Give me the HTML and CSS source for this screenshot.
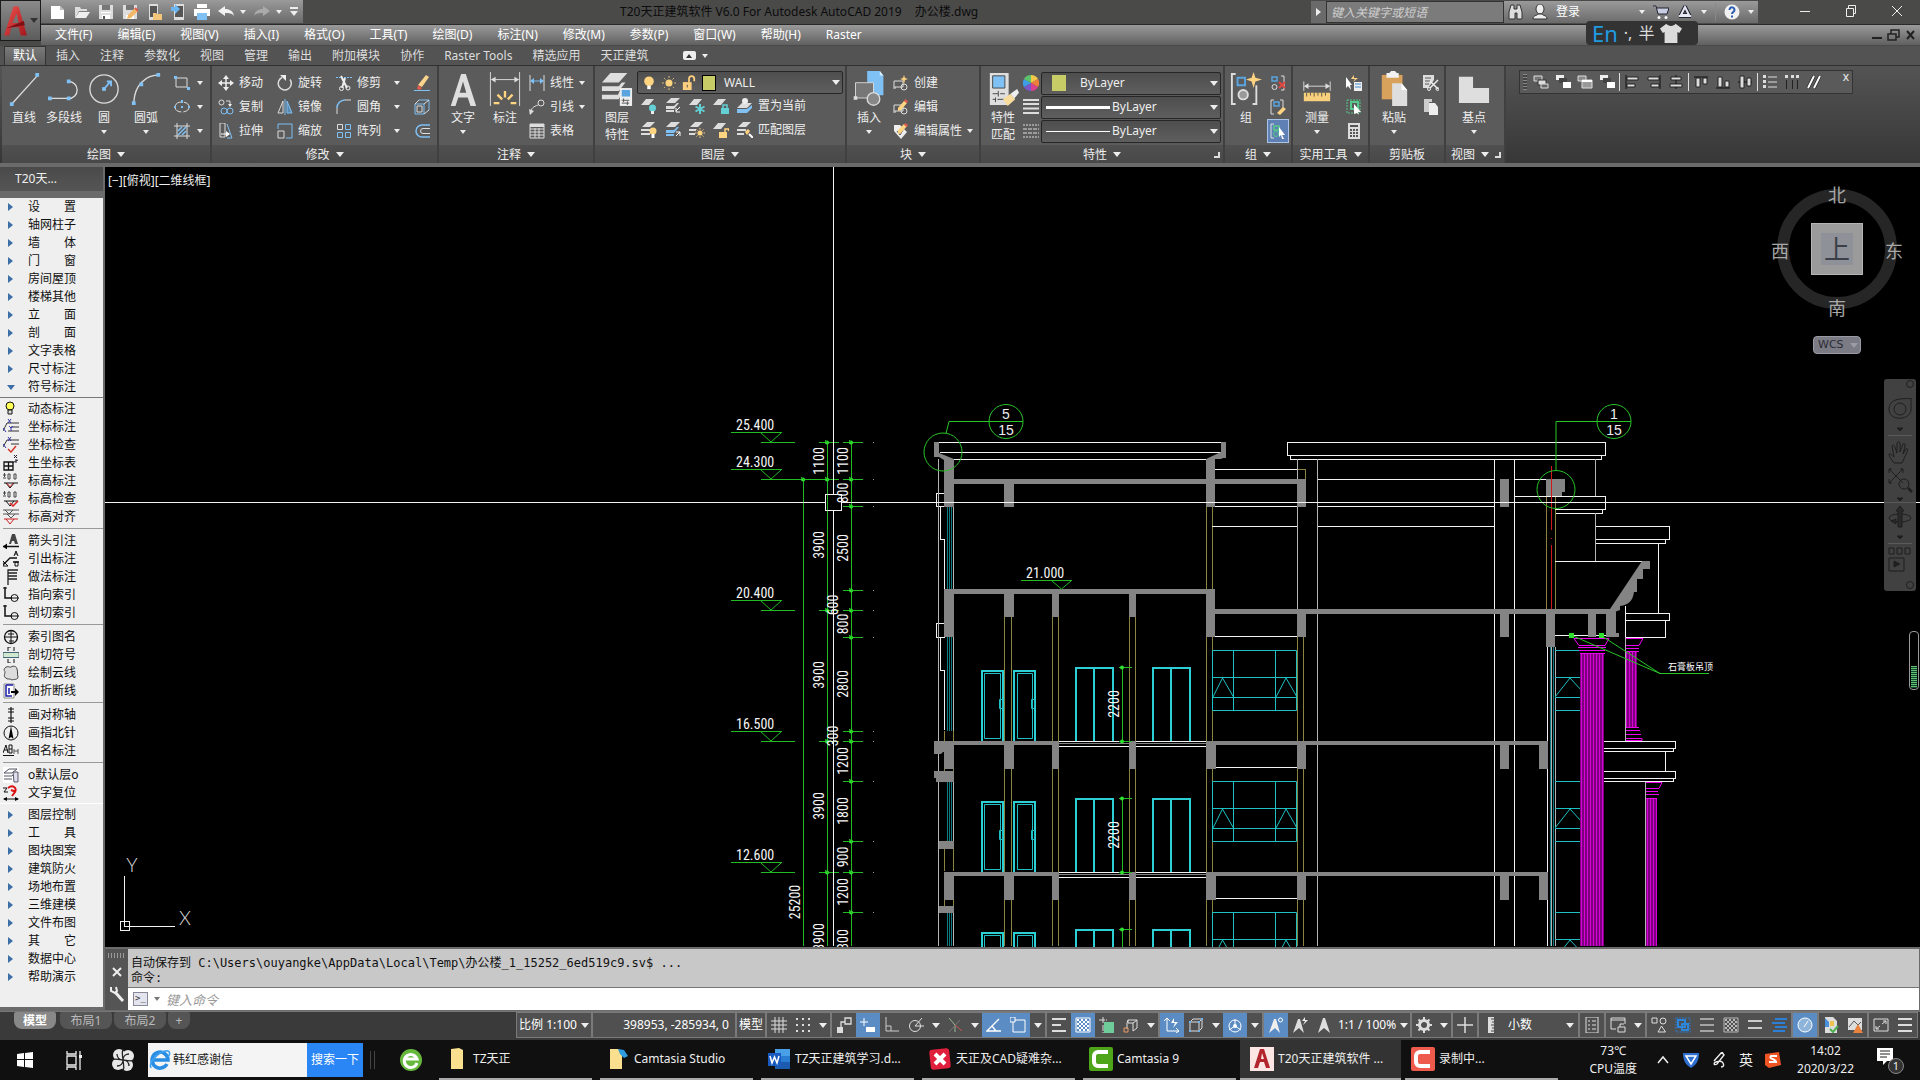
FILE: index.html
```html
<!DOCTYPE html>
<html lang="zh-CN">
<head>
<meta charset="utf-8">
<title>T20天正建筑软件 V6.0 For Autodesk AutoCAD 2019 办公楼.dwg</title>
<link rel="stylesheet" href="styles.css">
</head>
<body>
<svg class="sprite" aria-hidden="true">
  <defs>
    <linearGradient id="g-red" x1="0" y1="0" x2="1" y2="1"><stop offset="0" stop-color="#f0524f"/><stop offset="1" stop-color="#a3161c"/></linearGradient>
    <pattern id="flutes" width="3" height="8" patternUnits="userSpaceOnUse"><rect width="3" height="8" fill="#7d007d"/><rect width="1" height="8" fill="#d800d8"/></pattern>
    <pattern id="checks" width="4" height="4" patternUnits="userSpaceOnUse"><path d="M0 0h2v2H0zM2 2h2v2H2z" fill="#fff"/></pattern>
  </defs>
  <symbol id="i-new" viewBox="0 0 16 16"><path d="M1 2h9l4 4v9H1z" fill="#fff"/><path d="M10 2v4h4" fill="#bbb"/></symbol>
  <symbol id="i-open" viewBox="0 0 16 16"><path d="M1 14V3h5l1 2h6v2H5z" fill="#ddd"/><path d="M1 14L5 8h11l-4 6z" fill="#eee"/></symbol>
  <symbol id="i-save" viewBox="0 0 16 16"><path d="M1 1h14v14H1z" fill="#ddd"/><path d="M4 1h8v5H4z" fill="#777"/><path d="M3 8h10v1H3zM4 11h8v4H4z" fill="#fff"/><path d="M5 12h2v3H5z" fill="#555"/></symbol>
  <symbol id="i-saveas" viewBox="0 0 16 16"><path d="M1 1h14v14H1z" fill="#ddd"/><path d="M4 1h8v5H4z" fill="#777"/><path d="M4 11h8v4H4z" fill="#fff"/><path d="M6 11l7-7 3 3-7 7-4 1z" fill="#f2b866"/><path d="M13 4l3 3" stroke="#e25a4a" stroke-width="2"/></symbol>
  <symbol id="i-phone" viewBox="0 0 16 16"><path d="M3 0h9v16H3z" fill="#ddd"/><path d="M4 2h7v11H4z" fill="#555"/><path d="M7 9h3l1 1h5v6H7z" fill="#f3c57a"/></symbol>
  <symbol id="i-phone2" viewBox="0 0 16 16"><path d="M4 0h10v16H4z" fill="#ddd"/><path d="M5 2h8v11H5z" fill="#555"/><path d="M1 3h4V0l5 5-5 5V7H1z" fill="#6db5f0"/></symbol>
  <symbol id="i-print" viewBox="0 0 16 16"><path d="M3 0h10v4H3zM0 5h16v7H0z" fill="#fff"/><path d="M3 9h10v7H3z" fill="#7fc0f5"/></symbol>
  <symbol id="i-undo" viewBox="0 0 16 16"><path d="M0 7l7-5v3c5 0 8 2 9 7-2-3-5-3-9-3v3z" fill="#f2f2f2"/></symbol>
  <symbol id="i-redo" viewBox="0 0 16 16"><path d="M16 7L9 2v3C4 5 1 7 0 12c2-3 5-3 9-3v3z" fill="#aaa"/></symbol>
  <symbol id="i-line" viewBox="0 0 34 36"><path d="M4 34L31 4" stroke="#ddd" stroke-width="1.4"/><path d="M2 32h4v4H2zM29 1h4v4h-4z" fill="#7fc0f5"/></symbol>
  <symbol id="i-pline" viewBox="0 0 34 36"><path d="M2 28h20a9 9 0 0 0 0-18" fill="none" stroke="#ddd" stroke-width="1.4"/><path d="M0 26h4v4H0zM20 26h4v4h-4zM20 8h4v4h-4z" fill="#7fc0f5"/></symbol>
  <symbol id="i-circle" viewBox="0 0 34 36"><circle cx="17" cy="18" r="15" fill="none" stroke="#ddd" stroke-width="1.4"/><path d="M17 18l7-8m-4 0h4.500v5" stroke="#7fc0f5" stroke-width="2" fill="none"/><path d="M15 16h4v4h-4z" fill="#7fc0f5"/></symbol>
  <symbol id="i-arc" viewBox="0 0 34 36"><path d="M4 32C5 14 16 3 32 3" fill="none" stroke="#ddd" stroke-width="1.400"/><path d="M2 31h4v4H2zM10 11h4v4h-4zM28 1h4v4h-4z" fill="#7fc0f5"/></symbol>
  <symbol id="i-rect" viewBox="0 0 16 16"><path d="M2 3h11v9H2z" fill="none" stroke="#ddd"/><path d="M0 1h3v3H0zM13 12h3v3h-3z" fill="#7fc0f5"/></symbol>
  <symbol id="i-ellipse" viewBox="0 0 16 16"><ellipse cx="8" cy="8" rx="7" ry="5" fill="none" stroke="#ddd" stroke-dasharray="8 2"/><path d="M7 7h2v2H7zM7 1h2v3H7zM0 7h2v2H0zM14 7h2v2h-2z" fill="#7fc0f5"/></symbol>
  <symbol id="i-hatch" viewBox="0 0 16 16"><path d="M3 0v16M13 0v16M0 3h16M0 13h16" stroke="#ddd"/><path d="M4 12l8-8M4 8l4-4M8 12l4-4" stroke="#7fc0f5" stroke-width="1.500"/></symbol>
  <symbol id="i-move" viewBox="0 0 16 16"><path d="M8 2v12M2 8h12" stroke="#eee" stroke-width="1.500"/><path d="M8 0l3 4H5zM8 16l3-4H5zM0 8l4-3v6zM16 8l-4-3v6z" fill="#eee"/></symbol>
  <symbol id="i-rotate" viewBox="0 0 16 16"><path d="M5 2.500a6.500 6.500 0 1 0 8 2" fill="none" stroke="#ddd" stroke-width="1.500"/><path d="M3 0h6v6z" fill="#eee"/></symbol>
  <symbol id="i-trim" viewBox="0 0 16 16"><path d="M5 1l6 12M9 3L6 13" stroke="#eee" stroke-width="2"/><circle cx="5.500" cy="13.500" r="2" fill="none" stroke="#eee"/><circle cx="12" cy="13" r="2" fill="none" stroke="#eee"/><path d="M0 2.500h5M8 2.500h8" stroke="#7fc0f5" stroke-dasharray="2 1"/></symbol>
  <symbol id="i-erase" viewBox="0 0 16 16"><path d="M4 10L12 0l3 2-7 10z" fill="#f8d48c"/><path d="M4 10l4 3-2 2-3-1z" fill="#e25a4a"/><path d="M0 15.500h16" stroke="#7fc0f5"/></symbol>
  <symbol id="i-copy" viewBox="0 0 16 16"><circle cx="3.500" cy="3.500" r="2.500" fill="none" stroke="#ddd"/><circle cx="6" cy="12" r="3" fill="none" stroke="#7fc0f5"/><circle cx="12" cy="12" r="3" fill="none" stroke="#7fc0f5"/><path d="M8 2h4v5" fill="none" stroke="#ddd"/><path d="M10 5h4l-2 3z" fill="#eee"/></symbol>
  <symbol id="i-mirror" viewBox="0 0 16 16"><path d="M6 2v12H1z" fill="none" stroke="#ddd"/><path d="M10 2v12h5z" fill="#5a8ab0" stroke="#7fc0f5"/><path d="M8 0v16" stroke="#7fc0f5"/></symbol>
  <symbol id="i-fillet" viewBox="0 0 16 16"><path d="M1 15V9M9 1h6" stroke="#ddd"/><path d="M1 9a8 8 0 0 1 8-8" fill="none" stroke="#7fc0f5" stroke-width="1.500"/></symbol>
  <symbol id="i-box" viewBox="0 0 16 16"><path d="M1 5h9v10H1zM5 1h10v10" fill="none" stroke="#7fc0f5"/><path d="M3 7h5v6H3zM1 5l4-4M10 5l5-4M10 15l5-4" fill="none" stroke="#ddd"/></symbol>
  <symbol id="i-stretch" viewBox="0 0 16 16"><path d="M2 0h5v14H2z" fill="none" stroke="#ddd"/><path d="M9 1l5 14H9" fill="none" stroke="#7fc0f5"/><path d="M3 11h5" stroke="#fff"/><path d="M8 8l4 3-4 3z" fill="#fff"/></symbol>
  <symbol id="i-scale" viewBox="0 0 16 16"><path d="M1 8h6v7H1z" fill="none" stroke="#ddd"/><path d="M1 6V1h14v14H9" fill="none" stroke="#7fc0f5"/></symbol>
  <symbol id="i-array" viewBox="0 0 16 16"><path d="M1.500 1.500h5v5h-5z" fill="none" stroke="#ddd"/><path d="M9.500 1.500h5v5h-5zM1.500 9.500h5v5h-5zM9.500 9.500h5v5h-5z" fill="none" stroke="#7fc0f5"/></symbol>
  <symbol id="i-offset" viewBox="0 0 16 16"><path d="M16 2H8a6 6 0 0 0 0 12h8" fill="none" stroke="#7fc0f5" stroke-width="1.500"/><path d="M16 5.500H9a2.500 2.500 0 0 0 0 5h7" fill="none" stroke="#ddd"/></symbol>
  <symbol id="i-text" viewBox="0 0 34 36"><path d="M4 36L15 2h5l11 34h-6l-3-9H12l-3 9zM13.500 22h7L17 10z" fill="#dedede"/></symbol>
  <symbol id="i-dim" viewBox="0 0 34 36"><path d="M1.500 0v36M32.500 0v36M3 8h28" stroke="#ddd"/><path d="M2 8l5-3v6zM32 8l-5-3v6z" fill="#ddd"/><path d="M17 20v7M9 24l5 5M25 24l-5 5M5 33h6M23 33h6" stroke="#ffd480" stroke-width="2.500"/></symbol>
  <symbol id="i-linear" viewBox="0 0 16 16"><path d="M1 0v16M15 0v16" stroke="#ddd"/><path d="M3 6h10" stroke="#7fc0f5"/><path d="M1 6l4-3v6zM15 6l-4-3v6z" fill="#7fc0f5"/></symbol>
  <symbol id="i-leader" viewBox="0 0 16 16"><path d="M1 15C3 8 4 8 9 6" fill="none" stroke="#ddd"/><circle cx="12" cy="4" r="3" fill="none" stroke="#ddd"/><path d="M0 10l1 6 4-4z" fill="#ddd"/></symbol>
  <symbol id="i-table" viewBox="0 0 16 16"><path d="M1 1h14v14H1zM1 6h14M1 9h14M1 12h14M6 5v10M10 5v10" fill="none" stroke="#ddd"/><path d="M1 1h14v3H1z" fill="#ddd"/></symbol>
  <symbol id="i-layers" viewBox="0 0 34 36"><path d="M10 1h18l-9 10H1zM1 15h18l3-4h4l-7 9H1zM1 24h17l2-4h3l-4 9H1z" fill="#dedede"/><path d="M20 17h13v19H20z" fill="#eee"/><path d="M22 19h9v7h-9z" fill="#5aa5e0"/><path d="M22 30h8M24 28v4M22 33h8M28 31v4" stroke="#555"/></symbol>
  <symbol id="i-bulb" viewBox="0 0 16 16"><circle cx="8" cy="6" r="5.500" fill="#ffd480"/><path d="M6 11h4v4H6z" fill="#fff"/></symbol>
  <symbol id="i-sun" viewBox="0 0 16 16"><circle cx="8" cy="8" r="4" fill="#ffd480"/><path d="M8 0v16M0 8h16M2.500 2.500l11 11M13.500 2.500l-11 11" stroke="#ffd480" stroke-dasharray="2 12 2"/></symbol>
  <symbol id="i-unlock" viewBox="0 0 16 16"><path d="M1 7h10v9H1z" fill="#ffcf80"/><path d="M8 7V3a3 3 0 0 1 6 0v3" fill="none" stroke="#ffcf80" stroke-width="2"/><path d="M6 10v3" stroke="#444"/></symbol>
  <symbol id="i-lay1" viewBox="0 0 16 16"><path d="M5 1h8L8 7H0z" fill="#ddd"/><circle cx="11.500" cy="10" r="3.500" fill="#63d0d6"/><path d="M10 13h3v3h-3z" fill="#eee"/></symbol>
  <symbol id="i-lay2" viewBox="0 0 16 16"><path d="M6 0h9l-5 5H1zM1 8h8l3-3h2l-5 6H1z" fill="#ddd"/><path d="M1 12h8v2H1z" fill="#ddd"/><path d="M15 9l-4 4m0-3v4h4" stroke="#fff" fill="none"/></symbol>
  <symbol id="i-lay7" viewBox="0 0 16 16"><path d="M6 0h9l-5 5H1z" fill="#ddd"/><path d="M1 8h8l3-3h2l-5 6H1zM1 12h8v2H1z" fill="#7fc0f5"/><path d="M11 14l4-4m-4 0h4v4" stroke="#fff" fill="none"/></symbol>
  <symbol id="i-lay3" viewBox="0 0 16 16"><path d="M5 1h8L8 7H0z" fill="#ddd"/><path d="M11 6v10M6.500 8.500l9 5M15.500 8.500l-9 5" stroke="#63d0d6" stroke-width="2"/></symbol>
  <symbol id="i-lay4" viewBox="0 0 16 16"><path d="M5 1h8L8 7H0z" fill="#ddd"/><path d="M8 10h8v6H8z" fill="#63d0d6"/><path d="M10 10V7h4v3" fill="none" stroke="#63d0d6" stroke-width="1.500"/></symbol>
  <symbol id="i-lay5" viewBox="0 0 16 16"><path d="M5 5h10l-5 5H0z" fill="#ddd"/><circle cx="8" cy="3" r="3" fill="#eee"/><path d="M0 11h10l5-4v3l-5 5H0z" fill="#7fc0f5"/></symbol>
  <symbol id="i-lay6" viewBox="0 0 16 16"><path d="M6 0h8l-5 5H1zM0 7h9v2H0zM0 11h9v2H0z" fill="#ddd"/><circle cx="12" cy="9" r="3.500" fill="#ffd480"/><path d="M10.500 12h3v4h-3z" fill="#fff"/></symbol>
  <symbol id="i-lay8" viewBox="0 0 16 16"><path d="M6 0h8l-5 5H1zM0 7h7v2H0zM0 11h6v2H0z" fill="#ddd"/><circle cx="11" cy="11" r="2.500" fill="#ffd480"/><path d="M11 6v10M6 11h10M7.500 7.500l7 7M14.500 7.500l-7 7" stroke="#ffd480" stroke-dasharray="1.500 7 1.500"/></symbol>
  <symbol id="i-lay9" viewBox="0 0 16 16"><path d="M5 1h8L8 7H0z" fill="#ddd"/><path d="M6 10h8v6H6z" fill="#ffd480"/><path d="M12 10V7h3.500v2" fill="none" stroke="#ffd480" stroke-width="1.500"/></symbol>
  <symbol id="i-lay10" viewBox="0 0 16 16"><path d="M6 0h8l-5 5H1zM0 7h9v2H0zM0 11h7v2H0z" fill="#ddd"/><path d="M8 10l3-3 2 2-3 4z" fill="#ffd480"/><path d="M12 12l4 4" stroke="#fff" stroke-width="2"/></symbol>
  <symbol id="i-insert" viewBox="0 0 34 40"><path d="M15 0h14l4 5v22H15z" fill="#7fc0f5"/><path d="M29 0v5h4" fill="#ddeefc"/><path d="M2 13h20v17H2z" fill="#777" stroke="#ddd"/><circle cx="22" cy="31" r="7" fill="#888" stroke="#ddd" stroke-width="1.500"/><path d="M0 28h4v4H0z" fill="#ddd"/></symbol>
  <symbol id="i-create" viewBox="0 0 16 16"><path d="M1 6h9v6H1zM0 13h3" fill="none" stroke="#ddd"/><circle cx="11" cy="12" r="3" fill="none" stroke="#ddd"/><path d="M11 0l1 3 3 1-3 1-1 4-1-4-3-1 3-1z" fill="#ffd480"/></symbol>
  <symbol id="i-bedit" viewBox="0 0 16 16"><path d="M1 6h9v6H1zM0 13h3" fill="none" stroke="#ddd"/><circle cx="11" cy="12" r="3" fill="none" stroke="#ddd"/><path d="M5 9l6-7 3 2-6 7-3 1z" fill="#ffd480"/><path d="M11 2l1-2 3 2-1 2z" fill="#e25a4a"/></symbol>
  <symbol id="i-battr" viewBox="0 0 16 16"><path d="M1 2h6l7 7-6 7-7-8z" fill="#eee"/><path d="M4 8l3 4 3-5" stroke="#555" fill="none"/><path d="M5 7l6-6 3 2-6 7-3 1z" fill="#ffd480"/><path d="M11 2l1-2 3 2-1 2z" fill="#e25a4a"/></symbol>
  <symbol id="i-matchp" viewBox="0 0 34 36"><path d="M3 1h20v34H3z" fill="#dedede"/><path d="M6 4h13v13H6z" fill="#7fc0f5" stroke="#444"/><path d="M6 23h6M14 23h5M12 20v6M6 29h3M11 29h8M9 27v5" stroke="#444"/><path d="M17 29l8-6 5 6-8 7z" fill="#f8dc9c"/><path d="M25 23l7-5 2 4-5 6z" fill="#eee"/></symbol>
  <symbol id="i-wheel" viewBox="0 0 16 16"><path d="M8 8V0a8 8 0 0 1 7 4z" fill="#f2c84b"/><path d="M8 8l7-4a8 8 0 0 1 0 8z" fill="#ee7f3b"/><path d="M8 8l7 4a8 8 0 0 1-7 4z" fill="#d8428c"/><path d="M8 8v8a8 8 0 0 1-7-4z" fill="#7a57c9"/><path d="M8 8l-7 4a8 8 0 0 1 0-8z" fill="#3f9ee8"/><path d="M8 8L1 4a8 8 0 0 1 7-4z" fill="#5cc36c"/></symbol>
  <symbol id="i-lw" viewBox="0 0 16 16"><path d="M0 1h16M0 5h16M0 9.500h16M0 14h16" stroke="#ddd" stroke-width="2"/></symbol>
  <symbol id="i-lt" viewBox="0 0 16 16"><path d="M0 2h16M0 14h16" stroke="#ddd" stroke-dasharray="2 1"/><path d="M0 6h16M0 10h16" stroke="#ddd" stroke-dasharray="4 1"/></symbol>
  <symbol id="i-group" viewBox="0 0 34 36"><path d="M6 2H2v32h4M24 34h4V14" fill="none" stroke="#ddd" stroke-width="2"/><path d="M8 6h8v8H8z" fill="none" stroke="#5aa5e0" stroke-width="2"/><circle cx="14" cy="24" r="5" fill="#999" stroke="#ddd" stroke-width="2"/><path d="M25 0l2 6 7 2-7 2-2 7-2-7-6-2 6-2z" fill="#ffd480"/></symbol>
  <symbol id="i-g1" viewBox="0 0 16 16"><path d="M11 1h3v14h-3" fill="none" stroke="#ddd"/><path d="M2 2h5v4H2z" fill="none" stroke="#5aa5e0" stroke-width="1.500"/><circle cx="4.500" cy="12" r="2.500" fill="none" stroke="#ddd"/><path d="M9 7l6 6M15 7l-6 6" stroke="#e2463f" stroke-width="2"/></symbol>
  <symbol id="i-g2" viewBox="0 0 16 16"><path d="M4 1H1v14h3M10 1h3v8" fill="none" stroke="#ddd"/><path d="M4 3h5v4H4z" fill="none" stroke="#5aa5e0" stroke-width="1.500"/><path d="M7 14l6-6 3 2-6 6z" fill="#ffd480"/></symbol>
  <symbol id="i-g3" viewBox="0 0 16 16"><path d="M4 1H1v14h3" fill="none" stroke="#ddd"/><path d="M4 3h5v4H4z" fill="none" stroke="#57c98a" stroke-width="1.500"/><circle cx="6" cy="11" r="2.500" fill="none" stroke="#57c98a"/><path d="M9 4l6 8h-3l2 4h-2l-1-4-2 2z" fill="#fff"/></symbol>
  <symbol id="i-measure" viewBox="0 0 34 36"><path d="M3 10v10M31 10v10M5 15h24" stroke="#ddd"/><path d="M3 15l5-3v6zM31 15l-5-3v6z" fill="#ddd"/><path d="M3 22h28v9H3z" fill="#f8cf7c"/><path d="M6 22v4M10 22v3M14 22v4M18 22v3M22 22v4M26 22v3" stroke="#554"/></symbol>
  <symbol id="i-qsel" viewBox="0 0 16 16"><path d="M0 2l6 8H4l1 5-3-4-2 2z" fill="#fff"/><path d="M8 7h8v9H8z" fill="#eee"/><path d="M9 9h6M9 12h6" stroke="#3f88cc"/><path d="M8 0L5 4h4l-2 3 5-4H8z" fill="#ffd480"/></symbol>
  <symbol id="i-sel" viewBox="0 0 16 16"><path d="M1 1h13v13H1z" fill="none" stroke="#57c98a" stroke-dasharray="2 1"/><path d="M5 3h7v7H5z" fill="none" stroke="#57c98a" stroke-width="2"/><path d="M8 5l7 8h-3l1 3-2-2-3 1z" fill="#fff"/></symbol>
  <symbol id="i-calc" viewBox="0 0 16 16"><path d="M2 0h12v16H2z" fill="#ddd"/><path d="M4 2h8v2H4zM4 6h2v2H4zM7 6h2v2H7zM10 6h2v2h-2zM4 9h2v2H4zM7 9h2v2H7zM10 9h2v2h-2zM4 12h2v2H4zM7 12h2v2H7zM10 12h2v2h-2z" fill="#555"/></symbol>
  <symbol id="i-paste" viewBox="0 0 34 36"><path d="M4 3h22v26H4z" fill="#d9a25c"/><path d="M9 1h3l2-2h4l2 2h2v5H9z" fill="#f2f2f2"/><path d="M15 12h10l6 7v17H15z" fill="#dedede"/><path d="M25 12v7h6" fill="#fff"/></symbol>
  <symbol id="i-cut" viewBox="0 0 16 16"><path d="M0 0h11v5L5 13H0z" fill="#ddd"/><path d="M2 3h6M2 6h5M2 9h4" stroke="#555"/><path d="M15 5L7 13M7 6l8 8" stroke="#eee" stroke-width="1.500"/><circle cx="6" cy="14" r="1.500" fill="none" stroke="#eee"/><circle cx="14.500" cy="14" r="1.500" fill="none" stroke="#eee"/></symbol>
  <symbol id="i-cpy" viewBox="0 0 16 16"><path d="M1 0h8v3H6v10H1z" fill="#ccc"/><path d="M6 4h6l3 4v8H6z" fill="#eee"/></symbol>
  <symbol id="i-base" viewBox="0 0 34 36"><path d="M1 5h15v12h17v16H1z" fill="#dedede"/></symbol>
  <symbol id="i-order" viewBox="0 0 16 16"><path d="M1 2h8v5H1z" fill="#777" stroke="#ddd"/><path d="M5 6h8v5H5z" fill="#ddd" stroke="#333"/><path d="M8 10h7v4H8z" fill="#666" stroke="#ddd"/></symbol>
  <symbol id="i-order2" viewBox="0 0 16 16"><path d="M1 1h8v5H1z" fill="#eee"/><path d="M4 4h8v5H4z" fill="#444"/><path d="M8 8h8v6H8z" fill="#fff"/></symbol>
  <symbol id="i-order3" viewBox="0 0 16 16"><path d="M1 2h8v5H1z" fill="#888" stroke="#ddd"/><path d="M5 6h10v8H5z" fill="#999" stroke="#ddd"/><path d="M5 6h10v2H5z" fill="#fff"/></symbol>
  <symbol id="i-alh" viewBox="0 0 16 16"><path d="M2 1v14" stroke="#111"/><path d="M3 3h11v3H3zM3 10h8v3H3z" fill="#ddd" stroke="#222"/></symbol>
  <symbol id="i-alr" viewBox="0 0 16 16"><path d="M14 1v14" stroke="#111"/><path d="M2 3h11v3H2zM5 10h8v3H5z" fill="#ddd" stroke="#222"/></symbol>
  <symbol id="i-alc" viewBox="0 0 16 16"><path d="M8 1v14" stroke="#111"/><path d="M3 3h10v3H3zM2 10h12v3H2z" fill="#ddd" stroke="#222"/></symbol>
  <symbol id="i-alv" viewBox="0 0 16 16"><path d="M1 3h14" stroke="#111"/><path d="M3 4h4v9H3zM10 4h4v6h-4z" fill="#ddd" stroke="#222"/></symbol>
  <symbol id="i-alb" viewBox="0 0 16 16"><path d="M1 14h14" stroke="#111"/><path d="M3 3h4v10H3zM10 7h4v6h-4z" fill="#ddd" stroke="#222"/></symbol>
  <symbol id="i-alm" viewBox="0 0 16 16"><path d="M1 8h14" stroke="#111"/><path d="M3 2h4v12H3zM10 4h4v8h-4z" fill="#ddd" stroke="#222"/></symbol>
  <symbol id="i-dots" viewBox="0 0 16 16"><path d="M1 1h3v3H1zM1 6h3v3H1zM1 11h3v3H1z" fill="#ddd"/><path d="M6 3h9M6 8h9M6 13h9" stroke="#ddd"/></symbol>
  <symbol id="i-dotsv" viewBox="0 0 16 16"><path d="M1 1h3v3H1zM7 1h3v3H7zM12 1h3v3h-3z" fill="#ddd"/><path d="M2.500 6v9M8.500 6v9M13.500 6v9" stroke="#222"/></symbol>
  <symbol id="i-par" viewBox="0 0 16 16"><path d="M2 14L8 2M8 14l6-12" stroke="#111" stroke-width="3"/><path d="M2 14L8 2M8 14l6-12" stroke="#fff" stroke-width="2"/></symbol>
  <symbol id="t-bulb" viewBox="0 0 16 16"><circle cx="7" cy="5" r="4" fill="#ffff55" stroke="#111"/><path d="M5 9h4v4H5z" fill="#ddd" stroke="#111"/></symbol>
  <symbol id="t-coord" viewBox="0 0 16 16"><path d="M0 12l4-8h12M8 8h8M5 12h11" stroke="#333" fill="none"/><path d="M5 0l3 4M8 0L5 4M6 7l2 2 2-2M8 9v3M0 9l3 4" stroke="#33a" fill="none"/></symbol>
  <symbol id="t-coord2" viewBox="0 0 16 16"><path d="M0 10l4-7h12M8 7h8" stroke="#333" fill="none"/><path d="M5 0l3 4M8 0L5 4M0 7l3 4" stroke="#33a"/><path d="M5 12l3 3 5-6" stroke="#d43a2a" stroke-width="1.500" fill="none"/></symbol>
  <symbol id="t-grid" viewBox="0 0 16 16"><path d="M1 7h9v8H1zM1 11h9M5.500 7v8" fill="none" stroke="#111" stroke-width="1.300"/><path d="M9 8l6-3M11 0l3 3M14 0l-3 3M13 4v4" stroke="#223"/></symbol>
  <symbol id="t-elev" viewBox="0 0 16 16"><path d="M0 2h3M1.500 0v4M0 5h3M5 1h2v5H5zM11 1h2v5h-2z" stroke="#444" fill="none"/><path d="M1 10h14M3 10l4 5 4-5" stroke="#111" fill="none"/><path d="M4 10l3 4 3-4" stroke="#c33" fill="none"/></symbol>
  <symbol id="t-elev2" viewBox="0 0 16 16"><path d="M0 2h3M1.500 0v4M0 5h3M5 1h2v5H5zM11 1h2v5h-2z" stroke="#444" fill="none"/><path d="M1 10h14M3 10l4 5 4-5" stroke="#111" fill="none"/><path d="M7 12l3 3 5-5" stroke="#d22" stroke-width="1.500" fill="none"/></symbol>
  <symbol id="t-elev3" viewBox="0 0 16 16"><path d="M0 1h16M0 5h16M2 1l4 4 4-4M4 5l4 4 4-4" stroke="#555" fill="none"/><path d="M1 10h14M3 10l4 5 4-5" stroke="#c22" fill="none"/></symbol>
  <symbol id="t-arrow" viewBox="0 0 16 16"><path d="M6 11L9 1h3l3 10h-3l-1-3H9l-1 3z" fill="#444"/><path d="M0 13.500h16" stroke="#111" stroke-width="1.500"/><path d="M0 13.500l4-3v6z"/></symbol>
  <symbol id="t-lead" viewBox="0 0 16 16"><path d="M0 14l7-7h7M10 11h6" stroke="#111" stroke-width="1.300" fill="none"/><path d="M0 15v-5l5 5zM11 5l2-5 2 5M12 3h2M12 11h3v4h-3z" stroke="#111" fill="none"/></symbol>
  <symbol id="t-layers" viewBox="0 0 16 16"><path d="M5 16V1h10M5 4h9M5 7h9M5 10h9" stroke="#222" stroke-width="1.300" fill="none"/></symbol>
  <symbol id="t-index" viewBox="0 0 16 16"><path d="M2 0v11h7" stroke="#111" stroke-width="1.500" fill="none"/><circle cx="11.500" cy="11" r="3.500" fill="none" stroke="#111"/><path d="M8 11h8M0 1h4" stroke="#111"/></symbol>
  <symbol id="t-circ" viewBox="0 0 16 16"><circle cx="8" cy="8" r="6.500" fill="none" stroke="#111" stroke-width="1.300"/><path d="M1 8h14M8 1v14M5 5h6M6 12h5" stroke="#111"/></symbol>
  <symbol id="t-sect" viewBox="0 0 16 16"><path d="M0 5.500h16v5H0z" fill="#cfe8cf" stroke="#467"/><path d="M8 0H5v4M11 0v4M5 12v4h3M11 12v4" stroke="#111" fill="none"/></symbol>
  <symbol id="t-cloud" viewBox="0 0 16 16"><path d="M2 3c3-3 5 0 6-1 3-2 6 0 6 2 1 3 0 5 1 8 0 3-4 2-6 3-2-2-5 0-6-2-3-1-1-4-1-6 0-1-2-2 0-4z" fill="#ddd" stroke="#444"/></symbol>
  <symbol id="t-break" viewBox="0 0 16 16"><path d="M1 1h10v14H1z" fill="#fff" stroke="#888"/><path d="M3 2h7M3 2v11h6M6 5v6" stroke="#1a1aa8" stroke-width="1.500" fill="none"/><path d="M8 8h4V5l4 4-4 4v-3H8z"/></symbol>
  <symbol id="t-axis" viewBox="0 0 16 16"><path d="M8 0v16M5 2h6M5 5h6M5 11h6M5 14h6" stroke="#111" stroke-width="1.200"/></symbol>
  <symbol id="t-north" viewBox="0 0 16 16"><circle cx="8" cy="8" r="7" fill="none" stroke="#111"/><path d="M8 1l2.500 13L8 12l-2.500 2z"/></symbol>
  <symbol id="t-name" viewBox="0 0 16 16"><path d="M0 10L3 2l2 8M1 7h4M6 2h3v8H6zM6 6h3M0 12.500h11" stroke="#111" fill="none"/><path d="M11 6v5M15 6v5M11 8h4" stroke="#555"/></symbol>
  <symbol id="t-deflay" viewBox="0 0 16 16"><path d="M0 0h16v16H0z" fill="#fff"/><path d="M6 2h8L9 6H1zM1 9h8l3-3M1 12h8" fill="none" stroke="#556"/><path d="M10 5h5v10h-4z" fill="#dde" stroke="#556"/></symbol>
  <symbol id="t-reset" viewBox="0 0 16 16"><path d="M0 3h4L1 7h4M1 14h14" stroke="#111" fill="none"/><path d="M0 14l4-2v4zM16 14l-4-2v4z"/><path d="M5 3c5-4 9 0 7 4l-3 4M8 5l5 2" stroke="#d11" stroke-width="2" fill="none"/></symbol>
  <symbol id="s-grid" viewBox="0 0 16 16"><path d="M4 0v16M8 0v16M12 0v16M0 4h16M0 8h16M0 12h16" stroke="#ddd"/></symbol>
  <symbol id="s-snap" viewBox="0 0 16 16"><path d="M1 2h14M1 8h14M1 14h14" stroke="#ddd" stroke-width="2" stroke-dasharray="2 4"/></symbol>
  <symbol id="s-infer" viewBox="0 0 16 16"><path d="M9 1h6v6H9zM9 5H5v8" fill="none" stroke="#ddd" stroke-width="1.300"/><path d="M1 10h6v6H1z" fill="#ddd"/></symbol>
  <symbol id="s-dyn" viewBox="0 0 16 16"><path d="M4 1v8M0 5h8" stroke="#fff"/><path d="M6 10h9v5H6z" fill="#fff"/></symbol>
  <symbol id="s-ortho" viewBox="0 0 16 16"><path d="M2 0v14h13M2 9h5v5" fill="none" stroke="#ccc"/></symbol>
  <symbol id="s-polar" viewBox="0 0 16 16"><circle cx="7" cy="9" r="5.500" fill="none" stroke="#ddd"/><path d="M7 9h9M7 9l7-8" stroke="#ddd"/></symbol>
  <symbol id="s-iso" viewBox="0 0 16 16"><path d="M2 1l6 7v7" stroke="#9ab89a" fill="none"/><path d="M2 15L13 3" stroke="#777"/><path d="M8 8l7 6" stroke="#c55"/></symbol>
  <symbol id="s-track" viewBox="0 0 16 16"><path d="M15 14H1L13 2M6 9l4 5" stroke="#fff" fill="none" stroke-width="1.300"/></symbol>
  <symbol id="s-osnap" viewBox="0 0 16 16"><path d="M3 3h12v12H3z" fill="none" stroke="#fff"/><path d="M0 0h5v5H0z" fill="#5c8cc4" stroke="#fff"/></symbol>
  <symbol id="s-lines" viewBox="0 0 16 16"><path d="M1 2h14M1 8h9M1 14h14" stroke="#ddd" stroke-width="2"/></symbol>
  <symbol id="s-trans" viewBox="0 0 16 16"><path d="M1 1h14v14H1z" fill="none" stroke="#fff"/><path d="M2 2h12v12H2z" fill="url(#checks)"/></symbol>
  <symbol id="s-cycle" viewBox="0 0 16 16"><path d="M5 5h10v11H5z" fill="#6ecb9a"/><path d="M4 0v6M0 3h8M4 8v8" stroke="#ddd" stroke-dasharray="6 1"/></symbol>
  <symbol id="s-cube" viewBox="0 0 16 16"><path d="M5 3h9v8l-4 3V6H5zM5 3l-1 3v6M10 6l4-3" fill="none" stroke="#ddd"/><path d="M1 11h4v4H1z" fill="none" stroke="#e89a6a"/></symbol>
  <symbol id="s-cube2" viewBox="0 0 16 16"><path d="M2 5h9v9H2zM2 5l3-3h9v9l-3 3M11 5l3-3" fill="none" stroke="#ddd"/><path d="M1 4h2v2H1zM10 4h2v2h-2zM1 13h2v2H1zM10 13h2v2h-2zM13 1h2v2h-2z" fill="#6db5f0"/></symbol>
  <symbol id="s-ucs" viewBox="0 0 16 16"><path d="M3 1v13h12M0 4l3-3 3 3M12 11l3 3-3 2" fill="none" stroke="#fff"/><path d="M10 1L7 6h4l-2 5 5-6h-4z" fill="#fff"/></symbol>
  <symbol id="s-gizmo" viewBox="0 0 16 16"><path d="M8 2v7M8 9l-6 4M8 9l6 4" stroke="#fff"/><circle cx="8" cy="9" r="6" fill="none" stroke="#fff"/><circle cx="8" cy="9" r="2" fill="#fff"/></symbol>
  <symbol id="s-anno" viewBox="0 0 16 16"><path d="M7 1l2 0 5 15-6-5-6 5z" fill="#ddd"/></symbol>
  <symbol id="s-anno2" viewBox="0 0 16 16"><path d="M6 2l2 0 4 14-5-5-6 5z" fill="#eee"/><circle cx="12.500" cy="3" r="2" fill="none" stroke="#fff"/></symbol>
  <symbol id="s-anno3" viewBox="0 0 16 16"><path d="M6 2l2 0 4 14-5-5-6 5z" fill="#ddd"/><path d="M13 0l-3 4h3l-2 4 5-5h-3z" fill="#eee"/></symbol>
  <symbol id="s-gear" viewBox="0 0 16 16"><circle cx="8" cy="8" r="4.500" fill="none" stroke="#ddd" stroke-width="3"/><path d="M8 0v3M8 13v3M0 8h3M13 8h3M2.500 2.500l2 2M11.500 11.500l2 2M13.500 2.500l-2 2M4.500 11.500l-2 2" stroke="#ddd" stroke-width="2"/></symbol>
  <symbol id="s-plus" viewBox="0 0 16 16"><path d="M8 0v16M0 8h16" stroke="#ddd" stroke-width="1.500"/></symbol>
  <symbol id="s-ruler" viewBox="0 0 16 16"><path d="M5 0h6v16H5z" fill="#ddd"/><path d="M11 2H8M11 5H9M11 8H8M11 11H9M11 14H8" stroke="#444"/></symbol>
  <symbol id="s-prop" viewBox="0 0 16 16"><path d="M2 0h12v16H2z" fill="none" stroke="#ddd"/><path d="M4 4h2M8 4h4M4 8h2M8 8h4M4 12h2M8 12h4" stroke="#ddd"/></symbol>
  <symbol id="s-lock" viewBox="0 0 16 16"><path d="M15 7V1H1v11h5M1 3h14" fill="none" stroke="#ddd"/><path d="M8 10h7v5H8zM10 10V7h4" fill="none" stroke="#ddd"/></symbol>
  <symbol id="s-iso2" viewBox="0 0 16 16"><path d="M1 1h5v5H1zM7 15l3.500-6 4 6z" fill="none" stroke="#ddd"/><circle cx="12" cy="4" r="3" fill="none" stroke="#ddd"/></symbol>
  <symbol id="s-blue" viewBox="0 0 16 16"><path d="M1 1h14v14H1z" fill="none" stroke="#2b76c4" stroke-dasharray="2 1"/><path d="M3 3h7v7H3zM7 7h6v6H7z" fill="none" stroke="#2b86dc" stroke-width="2"/></symbol>
  <symbol id="s-eq" viewBox="0 0 16 16"><path d="M1 4h14M1 11h14" stroke="#ccc" stroke-width="2"/></symbol>
  <symbol id="s-bl" viewBox="0 0 16 16"><path d="M4 2h12M1 6h13M4 10h12M2 14h12" stroke="#2b7fd6" stroke-width="2"/></symbol>
  <symbol id="s-clock" viewBox="0 0 16 16"><circle cx="8" cy="8" r="7" fill="#8eb4da" stroke="#fff"/><path d="M7 10l4-6" stroke="#fff"/></symbol>
  <symbol id="s-doc" viewBox="0 0 16 16"><path d="M2 0h8l4 4v12H2z" fill="#ddd"/><path d="M2 1l4 4v5H2z" fill="#4a90d9"/><path d="M7 4h4v5H7z" fill="#f0c34c"/><path d="M7 12l3 3 5-6" stroke="#4caf50" stroke-width="2" fill="none"/></symbol>
  <symbol id="s-warn" viewBox="0 0 16 16"><path d="M1 1h14v12H1z" fill="#ddd"/><path d="M2 10l5-6 4 4 3-3" stroke="#555" fill="none"/><path d="M11 7l5 9H6z" fill="#e8823c"/></symbol>
  <symbol id="s-full" viewBox="0 0 16 16"><path d="M1 2h14v12H1zM9 7l4-3m-3 0h3v3M7 9l-4 3m3 0H3V9" fill="none" stroke="#ddd"/></symbol>
  <symbol id="s-menu" viewBox="0 0 16 16"><path d="M1 2h14M1 8h14M1 14h14" stroke="#ddd" stroke-width="2"/></symbol>
  <symbol id="k-win" viewBox="0 0 24 24"><path d="M4 6l7-1v6H4zM12 5l8-1v7h-8zM4 12h7v7l-7-1zM12 12h8v8l-8-1z" fill="#fff"/></symbol>
  <symbol id="k-task" viewBox="0 0 24 24"><path d="M5 8h9v9H5zM5 3v3h9V3M5 22v-3h9v3M18 3v4M18 10v12" fill="none" stroke="#eee" stroke-width="1.300"/><path d="M17 7h3v3h-3z" fill="#eee"/></symbol>
  <symbol id="k-swirl" viewBox="0 0 24 24"><g fill="#e8e8e8"><circle cx="8" cy="7" r="6"/><circle cx="17" cy="8" r="6"/><circle cx="16" cy="17" r="6"/><circle cx="7" cy="16" r="6"/></g><path d="M12 12C8 12 6 9 6 6M12 12c0-4 3-6 6-6M12 12c4 0 6 3 6 6M12 12c0 4-3 6-6 6M12 1c-2 4 0 8 0 11s2 7 0 11M1 12c4-2 8 0 11 0s7 2 11 0" fill="none" stroke="#222" stroke-width="1.300"/></symbol>
  <symbol id="k-ie" viewBox="0 0 24 24"><path d="M19 16A8 8 0 1 1 20 12H6" fill="none" stroke="#2a8de4" stroke-width="3.500"/><path d="M3 20C0 14 12 2 20 3c3 1 1 5 0 6" fill="none" stroke="#3da0f0" stroke-width="1.600"/></symbol>
  <symbol id="k-ge" viewBox="0 0 24 24"><circle cx="12" cy="12" r="11" fill="#67b93e"/><path d="M18 15A6.500 6.500 0 1 1 18 11H7" fill="none" stroke="#fff" stroke-width="3"/></symbol>
  <symbol id="k-folder" viewBox="0 0 24 24"><path d="M6 2h8v18l-8 2z" fill="#f6d06b"/><path d="M6 2l8-1 4 2v19h-4l-8 0z" fill="#fadf8e"/></symbol>
  <symbol id="k-folder2" viewBox="0 0 24 24"><path d="M4 2h8l4 2v18H4z" fill="#fadf8e"/><path d="M12 2l6 1 4 6-4 2-4-4z" fill="#2f9be0"/></symbol>
  <symbol id="k-word" viewBox="0 0 24 24"><path d="M8 2h15v20H8z" fill="#4aa0e6"/><path d="M8 9h15v6H8z" fill="#2b7cd3"/><path d="M8 15h15v7H8z" fill="#1b5bb0"/><path d="M1 6h13v13H1z" fill="#185abd"/><path d="M3 9l2 7 2.500-6L10 16l2-7" fill="none" stroke="#fff" stroke-width="1.500"/></symbol>
  <symbol id="k-x" viewBox="0 0 24 24"><rect x="2" y="2" width="20" height="20" rx="3" fill="#e01f3d" transform="rotate(-6 12 12)"/><path d="M7 7l10 10M17 7L7 17" stroke="#fff" stroke-width="4"/></symbol>
  <symbol id="k-cam" viewBox="0 0 24 24"><rect width="24" height="24" rx="2" fill="#4ea51a"/><path d="M19 5H9a4 4 0 0 0-4 4v6a4 4 0 0 0 4 4h10" fill="none" stroke="#fff" stroke-width="4"/></symbol>
  <symbol id="k-rec" viewBox="0 0 24 24"><rect width="24" height="24" rx="2" fill="#ee5a4c"/><path d="M19 5H9a4 4 0 0 0-4 4v6a4 4 0 0 0 4 4h10" fill="none" stroke="#fff" stroke-width="4"/></symbol>
  <symbol id="k-cad" viewBox="0 0 24 24"><path d="M0 0h24v24H0z" fill="#fbe6e4"/><path d="M4 21L10 2h4l6 19h-4l-2-6h-4l-2 6zM11 12h3l-2-6z" fill="#b3252c"/></symbol>
  <symbol id="k-shield" viewBox="0 0 16 16"><path d="M0 1h16c0 8-3 12-8 15C3 13 0 9 0 1z" fill="#2f6fd0"/><path d="M3 4h10L8 12z" fill="none" stroke="#fff" stroke-width="1.500"/></symbol>
  <symbol id="k-pen" viewBox="0 0 16 16"><path d="M3 9L11 0l2 3-7 9c-3 2-4-1-1-2s6-1 7 1 1 4-2 4" fill="none" stroke="#eee" stroke-width="1.400"/></symbol>
  <symbol id="k-s" viewBox="0 0 16 16"><path d="M0 2l14-2 2 13-12 3-4-3z" fill="#ee5522"/><path d="M12 4H6c-3 3 5 3 5 6H4" fill="none" stroke="#fff" stroke-width="2"/></symbol>
  <symbol id="i-bino" viewBox="0 0 16 16"><path d="M3 1h3v4h3V1h3l2 7v7H9V9H7v6H1V8z" fill="#ddd" stroke="#333"/></symbol>
  <symbol id="i-user" viewBox="0 0 16 16"><ellipse cx="8" cy="5" rx="4" ry="5" fill="#eee" stroke="#333"/><path d="M1 15c0-4 4-3 5-5h4c1 2 5 1 5 5z" fill="#eee" stroke="#333"/></symbol>
  <symbol id="i-cart" viewBox="0 0 16 16"><path d="M0 2h3l2 8h9l2-6H4" fill="#c9cde0" stroke="#223"/><circle cx="6" cy="13.500" r="1.500" fill="#fff"/><circle cx="13" cy="13.500" r="1.500" fill="#fff"/></symbol>
  <symbol id="i-a360" viewBox="0 0 16 16"><path d="M8 3L4 11h8zM2 12l12 0" fill="none" stroke="#223" stroke-width="4" stroke-linejoin="round"/><path d="M8 3L4 11h8zM2 12l12 0" fill="none" stroke="#e6e8f4" stroke-width="2"/></symbol>
  <symbol id="i-help" viewBox="0 0 16 16"><circle cx="8" cy="8" r="7.500" fill="#f2f2f2"/><path d="M5.500 6c0-4 5-3 5 0 0 2-2.500 2-2.500 4M8 11.500v2" fill="none" stroke="#2a5db0" stroke-width="2"/></symbol>
  <symbol id="i-shirt" viewBox="0 0 24 24"><path d="M7 2c2 3 8 3 10 0l7 5-3 5-2-1v12H5V11l-2 1-3-5z" fill="#dcdcdc"/></symbol>
</svg>

<header class="app-head">
  <button class="app-menu" aria-label="应用程序菜单">
    <svg viewBox="0 0 24 30"><path d="M1 29L10 1h5l8 28h-6l-2-8H8l-2 8zM9 17h6l-2-9z" fill="url(#g-red)"/><path d="M3 22l18-3-1-4z" fill="#7d1014"/></svg>
    <i class="arr"></i>
  </button>
  <div class="title-row">
    <div class="qat">
      <button aria-label="新建"><svg class="ic"><use href="#i-new"/></svg></button>
      <button aria-label="打开"><svg class="ic"><use href="#i-open"/></svg></button>
      <button aria-label="保存"><svg class="ic"><use href="#i-save"/></svg></button>
      <button aria-label="另存为"><svg class="ic"><use href="#i-saveas"/></svg></button>
      <button aria-label="从移动端打开"><svg class="ic"><use href="#i-phone"/></svg></button>
      <button aria-label="保存到移动端"><svg class="ic"><use href="#i-phone2"/></svg></button>
      <button aria-label="打印"><svg class="ic"><use href="#i-print"/></svg></button>
      <button class="wide" aria-label="放弃"><svg class="ic"><use href="#i-undo"/></svg><i class="arr"></i></button>
      <button class="wide" aria-label="重做"><svg class="ic"><use href="#i-redo"/></svg><i class="arr"></i></button>
      <button class="narrow" aria-label="自定义"><i class="bar"></i><i class="arr dn"></i></button>
    </div>
    <h1 class="doc-title">T20天正建筑软件 V6.0 For Autodesk AutoCAD 2019 <span>办公楼.dwg</span></h1>
    <div class="search"><i class="tri-r"></i><input type="text" aria-label="搜索" placeholder="键入关键字或短语"></div>
    <div class="info">
      <svg class="ic"><use href="#i-bino"/></svg><svg class="ic"><use href="#i-user"/></svg><button class="login">登录</button><i class="arr"></i>
      <svg class="ic"><use href="#i-cart"/></svg><svg class="ic"><use href="#i-a360"/></svg><i class="arr"></i><i class="vsep"></i><svg class="ic"><use href="#i-help"/></svg><i class="arr"></i>
    </div>
    <div class="win-btns">
      <button aria-label="最小化"><svg class="ic"><path d="M3 8.500h10" stroke="#eee"/></svg></button>
      <button aria-label="还原"><svg class="ic"><path d="M3.500 5.500h7v8h-7zM5.500 5V2.500h7v8h-2" fill="none" stroke="#eee"/></svg></button>
      <button aria-label="关闭"><svg class="ic"><path d="M3 3l10 10M13 3L3 13" stroke="#eee"/></svg></button>
    </div>
  </div>
  <nav class="menubar">
    <a href="#">文件(F)</a><a href="#">编辑(E)</a><a href="#">视图(V)</a><a href="#">插入(I)</a><a href="#">格式(O)</a><a href="#">工具(T)</a><a href="#">绘图(D)</a><a href="#">标注(N)</a><a href="#">修改(M)</a><a href="#">参数(P)</a><a href="#">窗口(W)</a><a href="#">帮助(H)</a><a href="#">Raster</a>
    <span class="mdi"><svg class="ic"><path d="M3 11h10" stroke="#222" stroke-width="2"/></svg><svg class="ic"><path d="M2 7h8v6H2zM5 7V3h8v7h-3" fill="none" stroke="#222" stroke-width="1.500"/></svg><svg class="ic"><path d="M4 4l7 8M11 4l-7 8" stroke="#222" stroke-width="2"/></svg></span>
  </nav>
  <div class="ime"><b>En</b><span>·,</span><span>半</span><svg><use href="#i-shirt"/></svg></div>
</header>

<nav class="tabs">
  <a class="on" href="#">默认</a><a href="#">插入</a><a href="#">注释</a><a href="#">参数化</a><a href="#">视图</a><a href="#">管理</a><a href="#">输出</a><a href="#">附加模块</a><a href="#">协作</a><a href="#">Raster Tools</a><a href="#">精选应用</a><a href="#">天正建筑</a>
  <button class="tab-toggle" aria-label="最小化功能区"><i class="tri-u"></i></button><i class="arr"></i>
</nav>

<section class="ribbon">
  <div class="panel p-draw"><div class="pbody">
    <button class="big"><svg><use href="#i-line"/></svg>直线</button>
    <button class="big"><svg><use href="#i-pline"/></svg>多段线</button>
    <button class="big"><svg><use href="#i-circle"/></svg>圆<i class="arr"></i></button>
    <button class="big w44"><svg><use href="#i-arc"/></svg>圆弧<i class="arr"></i></button>
    <div class="col"><button class="tool" aria-label="矩形"><svg class="ic"><use href="#i-rect"/></svg><i class="arr"></i></button><button class="tool" aria-label="椭圆"><svg class="ic"><use href="#i-ellipse"/></svg><i class="arr"></i></button><button class="tool" aria-label="图案填充"><svg class="ic"><use href="#i-hatch"/></svg><i class="arr"></i></button></div>
  </div><div class="pfoot">绘图<i class="arr dn"></i></div></div>

  <div class="panel p-mod"><div class="pbody">
    <div class="col"><button class="tool"><svg class="ic"><use href="#i-move"/></svg>移动</button><button class="tool"><svg class="ic"><use href="#i-copy"/></svg>复制</button><button class="tool"><svg class="ic"><use href="#i-stretch"/></svg>拉伸</button></div>
    <div class="col"><button class="tool"><svg class="ic"><use href="#i-rotate"/></svg>旋转</button><button class="tool"><svg class="ic"><use href="#i-mirror"/></svg>镜像</button><button class="tool"><svg class="ic"><use href="#i-scale"/></svg>缩放</button></div>
    <div class="col"><button class="tool"><svg class="ic"><use href="#i-trim"/></svg>修剪<i class="arr far"></i></button><button class="tool"><svg class="ic"><use href="#i-fillet"/></svg>圆角<i class="arr far"></i></button><button class="tool"><svg class="ic"><use href="#i-array"/></svg>阵列<i class="arr far"></i></button></div>
    <div class="col"><button class="tool" aria-label="删除"><svg class="ic"><use href="#i-erase"/></svg></button><button class="tool" aria-label="分解"><svg class="ic"><use href="#i-box"/></svg></button><button class="tool" aria-label="偏移"><svg class="ic"><use href="#i-offset"/></svg></button></div>
  </div><div class="pfoot">修改<i class="arr dn"></i></div></div>

  <div class="panel p-ann"><div class="pbody">
    <button class="big"><svg><use href="#i-text"/></svg>文字<i class="arr"></i></button>
    <button class="big w44"><svg><use href="#i-dim"/></svg>标注</button>
    <div class="col"><button class="tool"><svg class="ic"><use href="#i-linear"/></svg>线性<i class="arr"></i></button><button class="tool"><svg class="ic"><use href="#i-leader"/></svg>引线<i class="arr"></i></button><button class="tool"><svg class="ic"><use href="#i-table"/></svg>表格</button></div>
  </div><div class="pfoot">注释<i class="arr dn"></i></div></div>

  <div class="panel p-lay"><div class="pbody">
    <button class="big"><svg><use href="#i-layers"/></svg>图层<br>特性</button>
    <div class="col grow">
      <div class="combo"><svg class="ic"><use href="#i-bulb"/></svg><svg class="ic"><use href="#i-sun"/></svg><svg class="ic"><use href="#i-unlock"/></svg><i class="swatch dark"></i><select aria-label="图层"><option>WALL</option></select><i class="arr dn"></i></div>
      <div class="iconrow"><svg class="ic"><use href="#i-lay1"/></svg><svg class="ic"><use href="#i-lay2"/></svg><svg class="ic"><use href="#i-lay3"/></svg><svg class="ic"><use href="#i-lay4"/></svg><button class="tool"><svg class="ic"><use href="#i-lay5"/></svg>置为当前</button></div>
      <div class="iconrow"><svg class="ic"><use href="#i-lay6"/></svg><svg class="ic"><use href="#i-lay7"/></svg><svg class="ic"><use href="#i-lay8"/></svg><svg class="ic"><use href="#i-lay9"/></svg><button class="tool"><svg class="ic"><use href="#i-lay10"/></svg>匹配图层</button></div>
    </div>
  </div><div class="pfoot">图层<i class="arr dn"></i></div></div>

  <div class="panel p-blk"><div class="pbody">
    <button class="big"><svg><use href="#i-insert"/></svg>插入<i class="arr"></i></button>
    <div class="col"><button class="tool"><svg class="ic"><use href="#i-create"/></svg>创建</button><button class="tool"><svg class="ic"><use href="#i-bedit"/></svg>编辑</button><button class="tool"><svg class="ic"><use href="#i-battr"/></svg>编辑属性<i class="arr"></i></button></div>
  </div><div class="pfoot">块<i class="arr dn"></i></div></div>

  <div class="panel p-prop"><div class="pbody">
    <button class="big"><svg><use href="#i-matchp"/></svg>特性<br>匹配</button>
    <div class="col grow">
      <div class="proprow"><svg class="ic"><use href="#i-wheel"/></svg><div class="combo"><i class="swatch"></i><select aria-label="颜色"><option>ByLayer</option></select><i class="arr dn"></i></div></div>
      <div class="proprow"><svg class="ic"><use href="#i-lw"/></svg><div class="combo"><i class="stroke thick"></i><select aria-label="线宽"><option>ByLayer</option></select><i class="arr dn"></i></div></div>
      <div class="proprow"><svg class="ic"><use href="#i-lt"/></svg><div class="combo"><i class="stroke"></i><select aria-label="线型"><option>ByLayer</option></select><i class="arr dn"></i></div></div>
    </div>
  </div><div class="pfoot">特性<i class="arr dn"></i><i class="launch"></i></div></div>

  <div class="panel p-grp"><div class="pbody">
    <button class="big"><svg><use href="#i-group"/></svg>组</button>
    <div class="col"><button class="tool sq" aria-label="解除编组"><svg class="ic"><use href="#i-g1"/></svg></button><button class="tool sq" aria-label="组编辑"><svg class="ic"><use href="#i-g2"/></svg></button><button class="tool sq on" aria-label="组选择"><svg class="ic"><use href="#i-g3"/></svg></button></div>
  </div><div class="pfoot">组<i class="arr dn"></i></div></div>

  <div class="panel p-util"><div class="pbody">
    <button class="big"><svg><use href="#i-measure"/></svg>测量<i class="arr"></i></button>
    <div class="col"><button class="tool sq" aria-label="快速选择"><svg class="ic"><use href="#i-qsel"/></svg></button><button class="tool sq" aria-label="全部选择"><svg class="ic"><use href="#i-sel"/></svg></button><button class="tool sq" aria-label="计算器"><svg class="ic"><use href="#i-calc"/></svg></button></div>
  </div><div class="pfoot">实用工具<i class="arr dn"></i></div></div>

  <div class="panel p-clip"><div class="pbody">
    <button class="big"><svg><use href="#i-paste"/></svg>粘贴<i class="arr"></i></button>
    <div class="col"><button class="tool sq" aria-label="剪切"><svg class="ic"><use href="#i-cut"/></svg></button><button class="tool sq" aria-label="复制剪裁"><svg class="ic"><use href="#i-cpy"/></svg></button></div>
  </div><div class="pfoot">剪贴板</div></div>

  <div class="panel p-view"><div class="pbody">
    <button class="big"><svg><use href="#i-base"/></svg>基点<i class="arr"></i></button>
  </div><div class="pfoot">视图<i class="arr dn"></i><i class="launch"></i></div></div>

  <div class="toolbar">
    <i class="grip"></i>
    <svg class="ic"><use href="#i-order"/></svg><svg class="ic"><use href="#i-order2"/></svg><svg class="ic"><use href="#i-order3"/></svg><svg class="ic"><use href="#i-order2"/></svg><i class="vsep"></i>
    <svg class="ic"><use href="#i-alh"/></svg><svg class="ic"><use href="#i-alr"/></svg><svg class="ic"><use href="#i-alc"/></svg><i class="vsep"></i>
    <svg class="ic"><use href="#i-alv"/></svg><svg class="ic"><use href="#i-alb"/></svg><svg class="ic"><use href="#i-alm"/></svg><i class="vsep"></i>
    <svg class="ic"><use href="#i-dots"/></svg><svg class="ic"><use href="#i-dotsv"/></svg><svg class="ic"><use href="#i-par"/></svg>
    <button class="tb-close">x</button>
  </div>
</section>

<main class="work">
  <aside class="side">
    <h2>T20天...</h2>
    <div class="tree">
      <button><i class="t"></i>设　　置</button><button><i class="t"></i>轴网柱子</button><button><i class="t"></i>墙　　体</button><button><i class="t"></i>门　　窗</button><button><i class="t"></i>房间屋顶</button><button><i class="t"></i>楼梯其他</button><button><i class="t"></i>立　　面</button><button><i class="t"></i>剖　　面</button><button><i class="t"></i>文字表格</button><button><i class="t"></i>尺寸标注</button><button><i class="t open"></i>符号标注</button>
      <hr class="edge">
      <button><svg class="ic"><use href="#t-bulb"/></svg>动态标注</button><button><svg class="ic"><use href="#t-coord"/></svg>坐标标注</button><button><svg class="ic"><use href="#t-coord2"/></svg>坐标检查</button><button><svg class="ic"><use href="#t-grid"/></svg>生坐标表</button><button><svg class="ic"><use href="#t-elev"/></svg>标高标注</button><button><svg class="ic"><use href="#t-elev2"/></svg>标高检查</button><button><svg class="ic"><use href="#t-elev3"/></svg>标高对齐</button>
      <hr>
      <button><svg class="ic"><use href="#t-arrow"/></svg>箭头引注</button><button><svg class="ic"><use href="#t-lead"/></svg>引出标注</button><button><svg class="ic"><use href="#t-layers"/></svg>做法标注</button><button><svg class="ic"><use href="#t-index"/></svg>指向索引</button><button><svg class="ic"><use href="#t-index"/></svg>剖切索引</button>
      <hr>
      <button><svg class="ic"><use href="#t-circ"/></svg>索引图名</button><button><svg class="ic"><use href="#t-sect"/></svg>剖切符号</button><button><svg class="ic"><use href="#t-cloud"/></svg>绘制云线</button><button><svg class="ic"><use href="#t-break"/></svg>加折断线</button>
      <hr>
      <button><svg class="ic"><use href="#t-axis"/></svg>画对称轴</button><button><svg class="ic"><use href="#t-north"/></svg>画指北针</button><button><svg class="ic"><use href="#t-name"/></svg>图名标注</button>
      <hr>
      <button><svg class="ic"><use href="#t-deflay"/></svg>o默认层o</button><button><svg class="ic"><use href="#t-reset"/></svg>文字复位</button>
      <hr class="edge light">
      <button><i class="t"></i>图层控制</button><button><i class="t"></i>工　　具</button><button><i class="t"></i>图块图案</button><button><i class="t"></i>建筑防火</button><button><i class="t"></i>场地布置</button><button><i class="t"></i>三维建模</button><button><i class="t"></i>文件布图</button><button><i class="t"></i>其　　它</button><button><i class="t"></i>数据中心</button><button><i class="t"></i>帮助演示</button>
    </div>
  </aside>

  <section class="viewport">
    <div class="vp-label">[−][俯视][二维线框]</div>
    <svg class="drawing" viewBox="105 167 1815 779" preserveAspectRatio="xMinYMin meet">
      <defs>
        <g id="elev" class="gn"><path d="M731 432.500h51M761 433l10 9 10-9M761 442.500h34"/></g>
        <g id="tk"><path class="gn" d="M-8 .5h20"/><circle cx="0" cy="0.500" r="2" fill="#2fe02f"/><path d="M-2-2l4 4" class="gn"/></g>
        <!-- typical floor: slab, beams, doors and windows -->
        <g id="floor">
          <g class="cy2"><path d="M982 741v-70h21v70M1014 741v-70h21v70M1076 741v-73h37v73M1094 668v73M1153 741v-73h37v73M1171 668v73"/></g>
          <g class="cy"><path d="M984.500 738.500v-65h16v65zM1017.500 738.500v-65h15v65zM999.500 699.500h3v9h-3zM1031.500 699.500h3v9h-3z"/>
          <path d="M1212.500 650.500h84v60h-84zM1212 677.500h85M1212 697.500h85M1233.500 650v61M1275.500 650v61M1213 697l9.500-19 11 19M1276 697l10-19 11 19M1555 650.500h27M1555 677.500h27M1555 697.500h27M1555 710.500h31M1555 697l15-19 12 13"/></g>
          <path class="wh" d="M1059 741.500h70M1059 746.500h70M1136 741.500h71M1136 746.500h71M1215 767.500h82"/>
          <path class="gy" d="M954 741h105v4H954zM1206 741h342v4h-342zM944 741h10v28h-10zM1004 745h10v24h-10zM1052 745h7v24h-7zM1129 741h7v28h-7zM1206 745h10v24h-10zM1297 745h9v24h-9zM1500 745h9v24h-9zM1539 745h9v24h-9zM1059 743h70v1h-70zM1136 743h71v1h-71z"/>
          <path class="gn" d="M1122.500 667v74M1119 667.500h13M1119 741.500h13"/><circle cx="1122" cy="667.500" r="2" fill="#2fe02f"/><circle cx="1122" cy="741.500" r="2" fill="#2fe02f"/>
        </g>
      </defs>
      <!-- partition walls -->
      <path class="ye" d="M1004.500 617v329M1011.500 617v329M1052.500 617v329M1058.500 617v329M1129.500 617v329M1135.500 617v329M1206.500 507v82M1212.500 507v82M1206.500 637v309M1212.500 637v309M1297.500 637v309M1303.500 637v309M1297.500 479v-10h8v38M1546.500 496v113M1555.500 496v113M944.500 731v10M953.500 731v10M944.500 768v4M953.500 768v4M944.500 849v22M953.500 849v22M944.500 899v8M953.500 899v8"/>
      <!-- elevation outlines -->
      <path class="wh" d="M939 442.500h283M940 452.500h281M953 459.500h254M936.500 493v13h8v-13zM940.500 507v32h4v50M936.500 623v14h8v-14zM940.500 637v33h4v60M1215 469.500h82M1215 506.500h82M1212 526.500h85M1215 636.500h82
        M1287.500 442.500h318v13h-318zM1290.500 456v3h311v-3M1317 479.500h177M1317 506.500h177M1317 526.500h177M1514 479.500h32M1514 496.500h91v13h-50M1602.500 510v3h-47M1595 526.500h74v13h-74M1665.500 540v3h-70M1658.500 543v70M1555 561.500h87M1625.500 606v31M1625 613.500h44v7h-44M1665.500 621v16h-40M1555 635.500h51
        M1494.500 459v487M1514.500 459v487M1547.500 637v309M1602 741.500h73v7h-73M1673.500 748v3h-71M1665.500 751v20M1602 771.500h73v7h-73M1673.500 778v3h-71"/>
      <path class="lg" d="M938.500 459v487M1297.500 459v150M1317.500 459v487M1595.500 459v37M1595.500 513v48M953.500 507v82M953.500 637v94M953.500 782v60M953.500 912v34M1551.500 647v299M1555.500 647v299"/>
      <path class="tl" d="M947.500 507v82M949.500 507v82M951.500 507v82M947.500 637v94M949.500 637v94M951.500 637v94M947.500 782v60M949.500 782v60M951.500 782v60M947.500 912v34M949.500 912v34M951.500 912v34M1550.500 647v299M1553.500 647v299"/>
      <use href="#floor"/><use href="#floor" y="131"/><use href="#floor" y="262"/>
      <!-- cut concrete -->
      <path class="gy" d="M934 442h5v11l15 6v48h-10v-47l-5-3h-5zM1221 442h5v16h-3l-2 1h-6v48h-9v-48l15-7zM954 479h352v28h-9v-23H954zM1004 484h10v23h-10zM944 589h268v5H944zM944 589h10v48h-10zM1004 594h10v23h-10zM1052 594h7v23h-7zM1129 594h7v23h-7zM1206 589h9v48h-9zM1206 609h406v5h-406zM1297 614h9v23h-9zM1500 614h9v23h-9zM1500 479h9v28h-9zM1546 479h19v13h-3v4h-16zM1546 609h9v38h-9zM1588 614h8v23h-8zM1606 609h10v24h3v4h-13z
        M1642 561h8v8h-7v10h-6v13h-3c-1 8-5 13-14 14v4l-8 3-2-4zM934 741h20v11h-11l-2 2h-7zM934 771h20v11h-18v-4h-2zM939 841h15v8h-15zM939 906h15v7h-15z"/>
      <path d="M1551.500 466v64M1551.500 538v1M1551.500 545v64" class="rd"/>
      <!-- stone columns -->
      <g><rect x="1580" y="653" width="24" height="293" fill="url(#flutes)"/><rect x="1625" y="652" width="12" height="75" fill="url(#flutes)"/><rect x="1645" y="799" width="12" height="147" fill="url(#flutes)"/></g>
      <path class="mg" d="M1574 638.500h35l-4 7h-26zM1578 647.500h28M1579 650.500h26M1580 653.500h25M1625 638.500h18l-4 7h-14M1625 648.500h14M1625 651.500h14M1625 727.500h14M1625 730.500h15M1625 734.500h16M1625 738.500h17v2h-17M1645 782.500h17l-3 6h-14M1645 791.500h13M1645 794.500h14M1645 798.500h12"/>
      <path class="lg" d="M1625.500 637v104M1645.500 782v164"/>
      <!-- levels and dimension strings -->
      <use href="#elev"/><use href="#elev" y="37"/><use href="#elev" y="168"/><use href="#elev" y="299"/><use href="#elev" y="430"/>
      <path class="gn" d="M1021 580.500h51M1052 581l9.500 8 9.500-8M803.500 479v467M827.500 442v504M851.500 442v504M795 479.500h30"/>
      <use href="#tk" x="827" y="442"/><use href="#tk" x="827" y="479"/><use href="#tk" x="827" y="610"/><use href="#tk" x="827" y="741"/><use href="#tk" x="827" y="872"/><use href="#tk" x="803" y="479"/>
      <use href="#tk" x="851" y="442"/><use href="#tk" x="851" y="479"/><use href="#tk" x="851" y="506"/><use href="#tk" x="851" y="590"/><use href="#tk" x="851" y="610"/><use href="#tk" x="851" y="637"/><use href="#tk" x="851" y="731"/><use href="#tk" x="851" y="741"/><use href="#tk" x="851" y="781"/><use href="#tk" x="851" y="841"/><use href="#tk" x="851" y="872"/><use href="#tk" x="851" y="912"/>
      <path class="dots" d="M873 442.500h1M873 479.500h1M873 506.500h1M873 590.500h1M873 610.500h1M873 637.500h1M873 731.500h1M873 741.500h1M873 781.500h1M873 841.500h1M873 872.500h1M873 912.500h1"/>
      <g class="cad">
        <text x="736" y="430">25.400</text><text x="736" y="467">24.300</text><text x="736" y="598">20.400</text><text x="736" y="729">16.500</text><text x="736" y="860">12.600</text><text x="1026" y="578">21.000</text>
      </g>
      <g class="cad mid">
        <text transform="translate(824 461) rotate(-90)">1100</text><text transform="translate(824 545) rotate(-90)">3900</text><text transform="translate(824 675) rotate(-90)">3900</text><text transform="translate(824 806) rotate(-90)">3900</text><text transform="translate(824 937) rotate(-90)">3900</text>
        <text transform="translate(848 461) rotate(-90)">1100</text><text transform="translate(848 493) rotate(-90)">800</text><text transform="translate(848 548) rotate(-90)">2500</text><text transform="translate(838 605) rotate(-90)">600</text><text transform="translate(848 624) rotate(-90)">800</text><text transform="translate(848 684) rotate(-90)">2800</text><text transform="translate(838 736) rotate(-90)">300</text><text transform="translate(848 761) rotate(-90)">1200</text><text transform="translate(848 811) rotate(-90)">1800</text><text transform="translate(848 857) rotate(-90)">900</text><text transform="translate(848 892) rotate(-90)">1200</text><text transform="translate(848 943) rotate(-90)">1800</text>
        <text transform="translate(800 902) rotate(-90)">25200</text><text transform="translate(1119 704) rotate(-90)">2200</text><text transform="translate(1119 835) rotate(-90)">2200</text>
      </g>
      <!-- detail callouts -->
      <g class="gr"><circle cx="1006" cy="421.500" r="17"/><circle cx="943" cy="452" r="19"/><path d="M1023 421.500h-74l-3 12"/><circle cx="1614" cy="421.500" r="17"/><circle cx="1556" cy="489.500" r="19"/><path d="M1631 421.500h-75v49M1572 635.500l88 38h49M1601 635.500l59 38"/></g>
      <path d="M1569 633h5v5h-5zM1599 633h5v5h-5z" class="node"/>
      <g class="ref"><text x="1006" y="419">5</text><text x="1006" y="435">15</text><text x="1614" y="419">1</text><text x="1614" y="435">15</text></g>
      <text class="note" x="1668" y="670">石膏板吊顶</text>
      <!-- UCS icon -->
      <path class="wh" d="M120.500 921.500h9v9h-9zM124.500 876v46M130 926.500h45M124.500 926v-4M124 926.500h6"/>
      <g class="ucs"><text x="132" y="872">Y</text><text x="185" y="925">X</text></g>
      <!-- crosshair -->
      <path class="wh" d="M833.500 167v327M833.500 511v435M105 502.500h720M842 502.500h1078M825.500 494.500h16v16h-16z"/>
    </svg>
    <div class="cube">
      <svg viewBox="0 0 132 132"><circle cx="66" cy="66" r="54" fill="none" stroke="#262626" stroke-width="12"/></svg>
      <span class="n">北</span><span class="w">西</span><span class="e">东</span><span class="s">南</span><b><i>上</i></b>
    </div>
    <button class="wcs">WCS<i></i></button>
    <div class="navbar">
      <svg viewBox="0 0 32 212" fill="none" stroke="#1f1f1f">
        <circle cx="26" cy="5" r="3.500"/><path d="M5 30c0-14 22-9 22-11v13c-3 10-22 10-22-2z"/><circle cx="16" cy="30" r="6"/><path d="M13 49h6l-3 3z" fill="#1f1f1f"/><path d="M4 56.500h24" stroke="#5a5a5a"/>
        <path d="M10 84c-2-3-5-6-5-9 2-1 3 2 5 3l-2-11c1-2 2-1 3 1l2 6V64c1-2 3-1 3 0v9l3-8c1-1 3 0 2 2l-2 8 3-5c2-1 2 1 1 3l-5 11z"/><path d="M5 90l14 14M5 104l14-14M5 94v-4h3M16 90h3v4M5 100v4h3"/><circle cx="20" cy="105" r="5"/><path d="M24 109l4 4" stroke-width="2.500"/><path d="M13 119h6l-3 3z" fill="#1f1f1f"/>
        <ellipse cx="16" cy="139" rx="11" ry="4"/><path d="M14 148v-16h-2l4-5 4 5h-2v16zM7 142l5-2v5z" fill="#2a2a2a"/><path d="M13 157h6l-3 3z" fill="#1f1f1f"/><path d="M4 164.500h24" stroke="#5a5a5a"/>
        <path d="M5 169h5v6H5zM13 169h5v6h-5zM21 169h5v6h-5zM5 179h15v13H5z"/><path d="M10 182v6l6-3z" fill="#1f1f1f"/><circle cx="26" cy="206" r="3.500"/>
      </svg>
    </div>
    <div class="meter"><i></i></div>
  </section>

  <section class="command">
    <div class="cmd-grip"><i class="dots3"></i><svg class="ic"><path d="M4 4l8 8M12 4l-8 8" stroke="#eee" stroke-width="2"/></svg><svg class="ic"><path d="M6 6l8 9" stroke="#eee" stroke-width="3"/><path d="M2 1v4l4 2 2-2-1-4" fill="none" stroke="#eee" stroke-width="2"/></svg></div>
    <div class="cmd-main">
      <div class="history"><p>自动保存到 C:\Users\ouyangke\AppData\Local\Temp\办公楼_1_15252_6ed519c9.sv$ ...</p><p>命令:</p></div>
      <div class="prompt"><span class="pi"></span><i class="arr gray"></i><input type="text" aria-label="命令" placeholder="键入命令"></div>
    </div>
  </section>
</main>

<footer class="bottom">
  <div class="layouts"><button class="on">模型</button><button>布局1</button><button>布局2</button><button>+</button></div>
  <div class="status">
    <div class="g"><button class="txt w-scale">比例 1:100<i class="arr dn"></i></button></div>
    <div class="g"><span class="txt w-coord">398953, -285934, 0</span></div>
    <div class="g"><button class="txt w-model">模型</button></div>
    <div class="g"><svg class="c"><use href="#s-grid"/></svg><svg class="c"><use href="#s-snap"/></svg><i class="arr dn"></i></div>
    <div class="g"><svg class="c"><use href="#s-infer"/></svg><svg class="c on"><use href="#s-dyn"/></svg><svg class="c"><use href="#s-ortho"/></svg><svg class="c"><use href="#s-polar"/></svg><i class="arr dn"></i><svg class="c"><use href="#s-iso"/></svg><i class="arr dn"></i><svg class="c on"><use href="#s-track"/></svg><svg class="c on"><use href="#s-osnap"/></svg><i class="arr dn"></i></div>
    <div class="g"><svg class="c"><use href="#s-lines"/></svg><svg class="c on"><use href="#s-trans"/></svg><svg class="c"><use href="#s-cycle"/></svg><svg class="c"><use href="#s-cube"/></svg><i class="arr dn"></i></div>
    <div class="g"><svg class="c on"><use href="#s-ucs"/></svg><svg class="c"><use href="#s-cube2"/></svg><i class="arr dn"></i><svg class="c on"><use href="#s-gizmo"/></svg><i class="arr dn"></i></div>
    <div class="g"><svg class="c on"><use href="#s-anno2"/></svg><svg class="c"><use href="#s-anno3"/></svg><svg class="c"><use href="#s-anno"/></svg><button class="txt w-scale">1:1 / 100%<i class="arr dn"></i></button></div>
    <div class="g"><svg class="c"><use href="#s-gear"/></svg><i class="arr dn"></i></div>
    <div class="g"><svg class="c"><use href="#s-plus"/></svg></div>
    <div class="g"><svg class="c"><use href="#s-ruler"/></svg><button class="txt w-unit">小数<i class="arr dn"></i></button></div>
    <div class="g"><svg class="c"><use href="#s-prop"/></svg></div>
    <div class="g"><svg class="c"><use href="#s-lock"/></svg><i class="arr dn"></i></div>
    <div class="g"><svg class="c"><use href="#s-iso2"/></svg><svg class="c"><use href="#s-blue"/></svg><svg class="c dim"><use href="#s-menu"/></svg><svg class="c dim"><use href="#s-trans"/></svg><svg class="c"><use href="#s-eq"/></svg><svg class="c"><use href="#s-bl"/></svg></div>
    <div class="g"><svg class="c on"><use href="#s-clock"/></svg></div>
    <div class="g"><svg class="c"><use href="#s-doc"/></svg><svg class="c"><use href="#s-warn"/></svg></div>
    <div class="g"><svg class="c"><use href="#s-full"/></svg><svg class="c"><use href="#s-menu"/></svg></div>
  </div>
</footer>

<nav class="taskbar">
  <button class="sys" aria-label="开始"><svg><use href="#k-win"/></svg></button>
  <button class="sys" aria-label="任务视图"><svg><use href="#k-task"/></svg></button>
  <button class="sys" aria-label="应用"><svg><use href="#k-swirl"/></svg></button>
  <form class="finder"><svg><use href="#k-ie"/></svg><input type="text" aria-label="搜索" value="韩红感谢信"><button type="button">搜索一下</button></form>
  <i class="tsep"></i>
  <button class="sys ge" aria-label="浏览器"><svg><use href="#k-ge"/></svg></button>
  <button class="task"><svg><use href="#k-folder"/></svg>TZ天正</button>
  <button class="task"><svg><use href="#k-folder2"/></svg>Camtasia Studio</button>
  <button class="task"><svg><use href="#k-word"/></svg>TZ天正建筑学习.d...</button>
  <button class="task"><svg><use href="#k-x"/></svg>天正及CAD疑难杂...</button>
  <button class="task"><svg><use href="#k-cam"/></svg>Camtasia 9</button>
  <button class="task on"><svg><use href="#k-cad"/></svg>T20天正建筑软件 ...</button>
  <button class="task"><svg><use href="#k-rec"/></svg>录制中...</button>
  <div class="tray">
    <div class="two temp"><span>73℃</span><span>CPU温度</span></div>
    <svg class="ic"><path d="M3 11l5-6 5 6" fill="none" stroke="#eee" stroke-width="1.500"/></svg>
    <svg class="ic"><use href="#k-shield"/></svg><svg class="ic"><use href="#k-pen"/></svg><span class="lang">英</span><svg class="ic"><use href="#k-s"/></svg>
    <div class="two clock"><span>14:02</span><span>2020/3/22</span></div>
    <div class="notif"><svg viewBox="0 0 24 24"><path d="M1 2h16v13h-6l-4 4v-4H1z" fill="#fff"/><path d="M4 5h10M4 8h10M4 11h7" stroke="#222"/></svg><b>1</b></div>
  </div>
</nav>
</body>
</html>
```
FILE: styles.css
```css
* { box-sizing: border-box; }
body {
  margin: 0;
  min-height: 100vh;
  display: flex;
  flex-direction: column;
  background: #3a3a3a;
  color: #eee;
  font: 12px/16px "Noto Sans", "Noto Sans CJK SC", sans-serif;
  overflow-x: hidden;
}
button, input, select { font: inherit; color: inherit; background: none; border: 0; padding: 0; margin: 0; outline: 0; border-radius: 0; }
button, a, span, p { white-space: nowrap; }
a { color: inherit; text-decoration: none; }
h1, h2, p { margin: 0; font: inherit; }
i { font-style: normal; }
svg { display: block; flex: none; }
.sprite { position: absolute; width: 0; height: 0; }
.ic { width: 16px; height: 16px; }
.arr { flex: none; width: 0; height: 0; border: 3px solid transparent; border-top: 4px solid #eee; border-bottom: 0; }
.arr.dn { border-width: 5px 4px 0; }
.arr.gray { border-top-color: #777; }
.vsep { width: 1px; height: 18px; background: #888; }

/* title bar and menu bar */
.app-head { position: relative; display: grid; grid-template-columns: 41px 1fr; grid-template-rows: 25px 21px; background: #4a4a49; }
.app-menu { grid-row: 1 / 3; height: 41px; display: flex; align-items: center; justify-content: center; gap: 2px; background: linear-gradient(#8a8a8a, #5c5c5c); border: 1px solid #1c1c1c; }
.app-menu svg { width: 25px; height: 32px; }
.app-menu .arr { border-width: 5px 4px 0; border-top-color: #333; }
.title-row { display: flex; align-items: stretch; border-bottom: 1px solid #2a2a2a; height: 25px; }
.qat { display: flex; align-items: center; width: 262px; height: 23px; padding-left: 5px; background: linear-gradient(#9a9a9a, #6a6a6a); }
.qat button { width: 24px; display: flex; align-items: center; justify-content: center; gap: 6px; }
.qat .wide { width: 36px; }
.qat .narrow { flex-direction: column; width: 16px; gap: 2px; }
.bar { width: 8px; height: 2px; background: #eee; }
.doc-title { flex: 1; padding-left: 317px; line-height: 23px; color: #0c0c0c; white-space: pre; }
.doc-title span { margin-left: 10px; }
.search { display: flex; align-items: center; width: 193px; height: 22px; margin-top: 1px; background: #6a6a6a; }
.tri-r { width: 0; height: 8px; margin: 0 5px; border: 4px solid transparent; border-left: 5px solid #eee; border-right: 0; }
.search input { flex: 1; min-width: 0; height: 22px; padding: 0 4px; background: #7b7b7b; border: 1px solid #333; font-style: italic; }
.search input::placeholder { color: #d0d0d0; opacity: 1; }
.info { display: flex; align-items: center; width: 254px; height: 22px; margin-top: 1px; padding: 0 4px; gap: 8px; background: linear-gradient(#9a9a9a, #6a6a6a); }
.info .login { margin: 0 auto 0 0; color: #fff; }
.win-btns { display: flex; margin-left: 24px; width: 138px; justify-content: space-around; align-items: center; height: 22px; }
.menubar { display: flex; align-items: center; gap: 25px; height: 20px; padding-left: 14px; background: linear-gradient(#9a9a9a, #606060); color: #fff; }
.mdi { margin-left: auto; display: flex; gap: 1px; padding-right: 1px; }
.ime { position: absolute; right: 222px; top: 21px; width: 112px; height: 24px; display: flex; align-items: center; gap: 6px; padding: 0 6px; background: #333; border-radius: 4px; color: #ddd; font-size: 16px; }
.ime b { color: #1f9be0; font-weight: 400; font-size: 22px; line-height: 24px; }
.ime svg { width: 22px; height: 22px; }

/* ribbon */
.tabs { display: flex; align-items: center; height: 20px; padding-left: 4px; background: #535353; border-bottom: 1px solid #303030; color: #ddd; }
.tabs a { padding: 1px 10px 0; line-height: 18px; }
.tabs a.on { background: linear-gradient(#7a7a7a, #5c5c5c); border: 1px solid #333; border-bottom: 0; padding: 0 8px; height: 19px; color: #fff; }
.tab-toggle { width: 13px; height: 9px; margin: 0 6px 0 24px; background: #eee; border-radius: 2px; }
.tri-u { display: block; width: 0; margin: 0 auto; border: 3px solid transparent; border-bottom: 4px solid #333; border-top: 0; }
.ribbon { display: flex; align-items: stretch; height: 101px; padding-left: 2px; background: linear-gradient(#545454, #373737 97px, #6b6b6b 97px); border-bottom: 4px solid #6b6b6b; }
.panel { display: flex; flex-direction: column; flex: none; background: #5b5b5b; border-right: 2px solid #404040; }
.pbody { display: flex; height: 79px; padding: 5px 2px 0; }
.pfoot { position: relative; flex: 1; display: flex; align-items: center; justify-content: center; gap: 6px; padding-top: 1px; background: linear-gradient(#505050, #484848); white-space: nowrap; }
.launch { position: absolute; right: 3px; bottom: 5px; width: 6px; height: 6px; border-right: 2px solid #ddd; border-bottom: 2px solid #ddd; }
.p-draw { width: 210px; }
.p-mod { width: 227px; }
.p-mod .pbody { padding-left: 6px; gap: 14px; }
.p-ann { width: 156px; }
.p-lay { width: 252px; }
.p-blk { width: 134px; }
.p-prop { width: 244px; }
.p-grp { width: 68px; }
.p-util { width: 77px; }
.p-clip { width: 76px; }
.p-view { width: 60px; }
.p-view .pfoot { padding-right: 10px; }
.big { display: flex; flex-direction: column; align-items: center; width: 40px; line-height: 17px; }
.p-ann .pbody, .p-util .pbody, .p-clip .pbody { padding-left: 4px; }
.p-view .pbody { padding-left: 8px; }
.w44 { width: 44px; }
.big svg { width: 32px; height: 36px; margin-bottom: 2px; }
.big .arr { margin-top: 4px; }
.col { display: flex; flex-direction: column; }
.col.grow { flex: 1; }
.tool { display: flex; align-items: center; gap: 5px; height: 24px; min-width: 20px; }
.tool .far { margin-left: 8px; }
.p-draw .col { padding-left: 6px; }
.p-draw .tool { gap: 7px; }
.p-ann .col { padding-left: 2px; }
.p-blk .col { padding-left: 4px; }
.sq { width: 22px; min-width: 22px; justify-content: center; }
.p-grp .col { padding-left: 2px; }
.p-util .col, .p-clip .col { padding-left: 6px; }
.sq.on { background: #5e80b4; border: 1px solid #a8c4e8; }
.combo { display: flex; align-items: center; gap: 6px; flex: 1; height: 23px; padding: 0 2px 0 4px; background: linear-gradient(#4e4e4e, #5e5e5e); border: 1px solid #262626; border-radius: 2px; }
.combo .ic { width: 14px; }
.col > .combo { flex: none; }
.combo select { appearance: none; flex: 1; min-width: 0; padding: 0 2px; }
.swatch { width: 14px; height: 16px; margin: 0 6px; background: #c8cc66; }
.swatch.dark { margin: 0; border: 1px solid #000; }
.stroke { width: 64px; height: 1px; background: #fff; }
.stroke.thick { height: 3px; }
.stroke + select { margin-left: -6px; }
.iconrow { display: flex; align-items: center; gap: 8px; height: 24px; padding-left: 4px; }
.proprow { display: flex; align-items: center; gap: 2px; height: 24px; }
.toolbar { display: flex; align-items: center; gap: 6px; width: 334px; height: 24px; margin: 4px 0 0 13px; padding: 0 3px; background: #5a5a5a; border: 1px solid #333; }
.toolbar .ic { width: 16px; }
.toolbar .vsep { background: #ddd; margin: 0 -2px; }
.grip { width: 4px; height: 16px; background: repeating-linear-gradient(#888 0 1px, #444 1px 3px); }
.tb-close { align-self: flex-start; margin-left: auto; line-height: 12px; }

/* work area */
.work { flex: 1; display: grid; grid-template-columns: 105px 1fr; grid-template-rows: 1fr 64px; min-height: 844px; background: #6b6b6b; }
.side { grid-row: 1 / 3; width: 103px; margin-bottom: 4px; background: #efefef; }
.side h2 { height: 31px; padding: 3px 0 0 15px; background: linear-gradient(#4a4a4a, #555 24px, #6b6b6b 24px); color: #eee; line-height: 18px; }
.tree { display: flex; flex-direction: column; color: #111; }
.tree button { display: flex; align-items: center; height: 18px; padding-left: 3px; text-align: left; gap: 9px; }
.tree hr { margin: 2px 0 3px 3px; width: 100px; height: 1px; border: 0; background: #999; }
.tree hr.edge { margin: 1px 0 2px; width: 103px; background: #777; }
.tree hr.light { background: #fff; }
.t { width: 0; margin: 0 6px 0 5px; border: 4px solid transparent; border-left: 5px solid #3a6ea5; border-right: 0; }
.t.open { border: 4px solid transparent; border-top: 5px solid #3a6ea5; border-bottom: 0; margin: 0 4px; }
.viewport { position: relative; background: #000; overflow: hidden; }
.vp-label { position: absolute; left: 3px; top: 5px; z-index: 1; line-height: 18px; }
.drawing { position: absolute; inset: 0; width: 100%; height: 100%; }
.drawing path { fill: none; }
.wh, .wh path { stroke: #f2f2f2; shape-rendering: crispEdges; }
.lg { stroke: #b4b4b4; shape-rendering: crispEdges; }
.drawing path.gy { fill: #848484; }
.drawing path.node { fill: #2fe02f; }
.ye { stroke: #8a8440; shape-rendering: crispEdges; }
.cy path { stroke: #1fc0c4; }
.cy2 path { stroke: #2cd0d4; stroke-width: 2; }
.tl { stroke: #0e7c80; shape-rendering: crispEdges; }
.rd { stroke: #d01818; shape-rendering: crispEdges; }
.mg { stroke: #f000f0; }
.gn, .gn path { stroke: #22bc22; }
.gr, .gr circle { stroke: #28c428; fill: none; }
.dots { stroke: #999; }
.cad { fill: #f4f4f4; font: 14px "Liberation Sans Narrow", "Roboto Condensed", sans-serif; }
.mid, .ref, .ucs { text-anchor: middle; }
.ref { fill: #eee; font: 14px "Liberation Sans", sans-serif; }
.note { fill: #fff; font: 9px "Noto Sans CJK SC", sans-serif; }
.ucs { fill: #ddd; font: 300 19px Lato, sans-serif; }
.cube { position: absolute; right: 17px; top: 16px; width: 132px; height: 132px; color: #a8a8a8; font: 18px/20px "Noto Sans CJK SC", sans-serif; }
.cube svg { width: 132px; height: 132px; }
.cube span { position: absolute; }
.cube .n { left: 57px; top: 1px; }
.cube .s { left: 57px; bottom: -2px; }
.cube .w { left: 0; top: 57px; }
.cube .e { right: 0; top: 57px; }
.cube b { position: absolute; left: 40px; top: 40px; width: 52px; height: 52px; display: grid; place-items: center; background: #9b9b9b; border: 1px solid #b4b4b4; }
.cube b i { width: 32px; height: 32px; background: #8f9199; color: #3c3f48; font: 26px/30px "Noto Sans CJK SC", serif; text-align: center; }
.wcs { position: absolute; right: 59px; top: 169px; width: 48px; height: 18px; display: flex; align-items: center; gap: 6px; padding-left: 4px; background: #7b7b86; border: 1px solid #9a9aa4; border-radius: 4px; color: #2b2b33; font: 11px/14px "DejaVu Sans", sans-serif; }
.wcs i { border: 4px solid transparent; border-top: 5px solid #9c9ca8; border-bottom: 0; }
.navbar { position: absolute; right: 4px; top: 212px; width: 32px; height: 212px; background: rgba(72, 72, 72, .9); border-radius: 3px; }
.navbar svg { width: 32px; height: 212px; }
.meter { position: absolute; right: 1px; top: 464px; width: 10px; height: 59px; border: 1px solid #999; border-radius: 4px; display: flex; align-items: flex-end; padding: 1px; }
.meter i { width: 6px; height: 22px; background: repeating-linear-gradient(#5fbf6a 0 1px, #143 1px 2px); }

/* command line */
.command { display: flex; margin: 2px 1px 1px 0; color: #222; }
.cmd-grip { width: 23px; display: flex; flex-direction: column; align-items: center; gap: 6px; padding-top: 4px; background: #555; }
.dots3 { width: 17px; height: 5px; background: repeating-linear-gradient(90deg, #999 0 1px, #555 1px 3px); }
.cmd-main { flex: 1; display: flex; flex-direction: column; }
.history { flex: 1; padding: 7px 3px 0; background: #c8c8c8; border-bottom: 1px solid #777; color: #111; }
.history p { font: 12px/15px "DejaVu Sans Mono", "Noto Sans CJK SC", monospace; }
.prompt { display: flex; align-items: center; gap: 6px; height: 22px; padding-left: 5px; background: #fff; }
.pi { width: 15px; height: 14px; border: 1px solid #889; background: #e4e4ee; font: 9px/11px "DejaVu Sans Mono", monospace; text-align: center; color: #333; }
.pi::before { content: ">_"; }
.prompt input { flex: 1; font: italic 13px "Noto Sans CJK SC", sans-serif; }
.prompt input::placeholder { color: #999; opacity: 1; }

/* layout tabs and status bar */
.bottom { display: flex; justify-content: space-between; height: 29px; padding-right: 2px; background: #3a3a3a; border-top: 1px solid #777; }
.layouts { display: flex; height: 17px; padding-left: 14px; color: #bbb; }
.layouts button { width: 52px; margin-right: 2px; background: #555; border-radius: 2px 2px 8px 8px; line-height: 16px; }
.layouts button.on { width: 42px; margin-right: 4px; background: #888; color: #fff; font-weight: 700; }
.layouts button:last-child { width: 22px; }
.status { display: flex; height: 26px; background: #505050; }
.g { display: flex; align-items: center; border: 1px solid #7a7a7a; }
.g > .arr { margin: 0 3px 0 4px; }
.c { width: 24px; height: 24px; padding: 4px; }
.c.on { background: #5c8cc4; }
.c.dim { opacity: .6; }
.txt { display: flex; align-items: center; justify-content: center; gap: 4px; color: #fff; }
.w-scale { width: 74px; }
.w-coord { width: 142px; justify-content: flex-end; padding-right: 6px; }
.w-model { width: 28px; }
.w-unit { width: 75px; justify-content: space-between; padding: 0 4px 0 5px; }

/* task bar */
.taskbar { display: flex; align-items: center; height: 40px; background: #101010; color: #eee; }
.sys { width: 49px; height: 40px; display: grid; place-items: center; }
.sys svg, .task svg { width: 24px; height: 24px; }
.sys.ge { margin: 0 4px 0 11px; }
.finder { display: flex; align-items: center; width: 215px; height: 34px; background: #f4f4f4; color: #222; margin-left: 1px; }
.finder svg { width: 24px; height: 24px; }
.finder input { flex: 1; min-width: 0; padding-left: 1px; }
.finder button { width: 56px; height: 34px; background: #2a86f5; color: #fff; }
.tsep { width: 5px; height: 18px; margin-left: 7px; border: 1px solid #444; border-width: 0 1px; }
.task { display: flex; align-items: center; gap: 4px; width: 153px; height: 40px; margin-right: 8px; padding: 0 0 0 6px; border-bottom: 2px solid #aaa; }
.task.on { width: 161px; margin: 0 4px 0 -4px; padding-left: 10px; background: #333; }
.tray { display: flex; align-items: center; gap: 12px; margin-left: auto; padding-right: 16px; }
.two { display: flex; flex-direction: column; align-items: center; line-height: 18px; }
.temp { margin-right: 6px; }
.clock { margin: 0 10px 0 4px; }
.lang { font-size: 14px; }
.notif { position: relative; width: 28px; height: 28px; }
.notif svg { width: 24px; height: 24px; }
.notif b { position: absolute; right: 0; bottom: 0; width: 16px; height: 16px; border: 1px solid #888; border-radius: 8px; background: #333; text-align: center; line-height: 14px; font-size: 11px; font-weight: 400; }
```
